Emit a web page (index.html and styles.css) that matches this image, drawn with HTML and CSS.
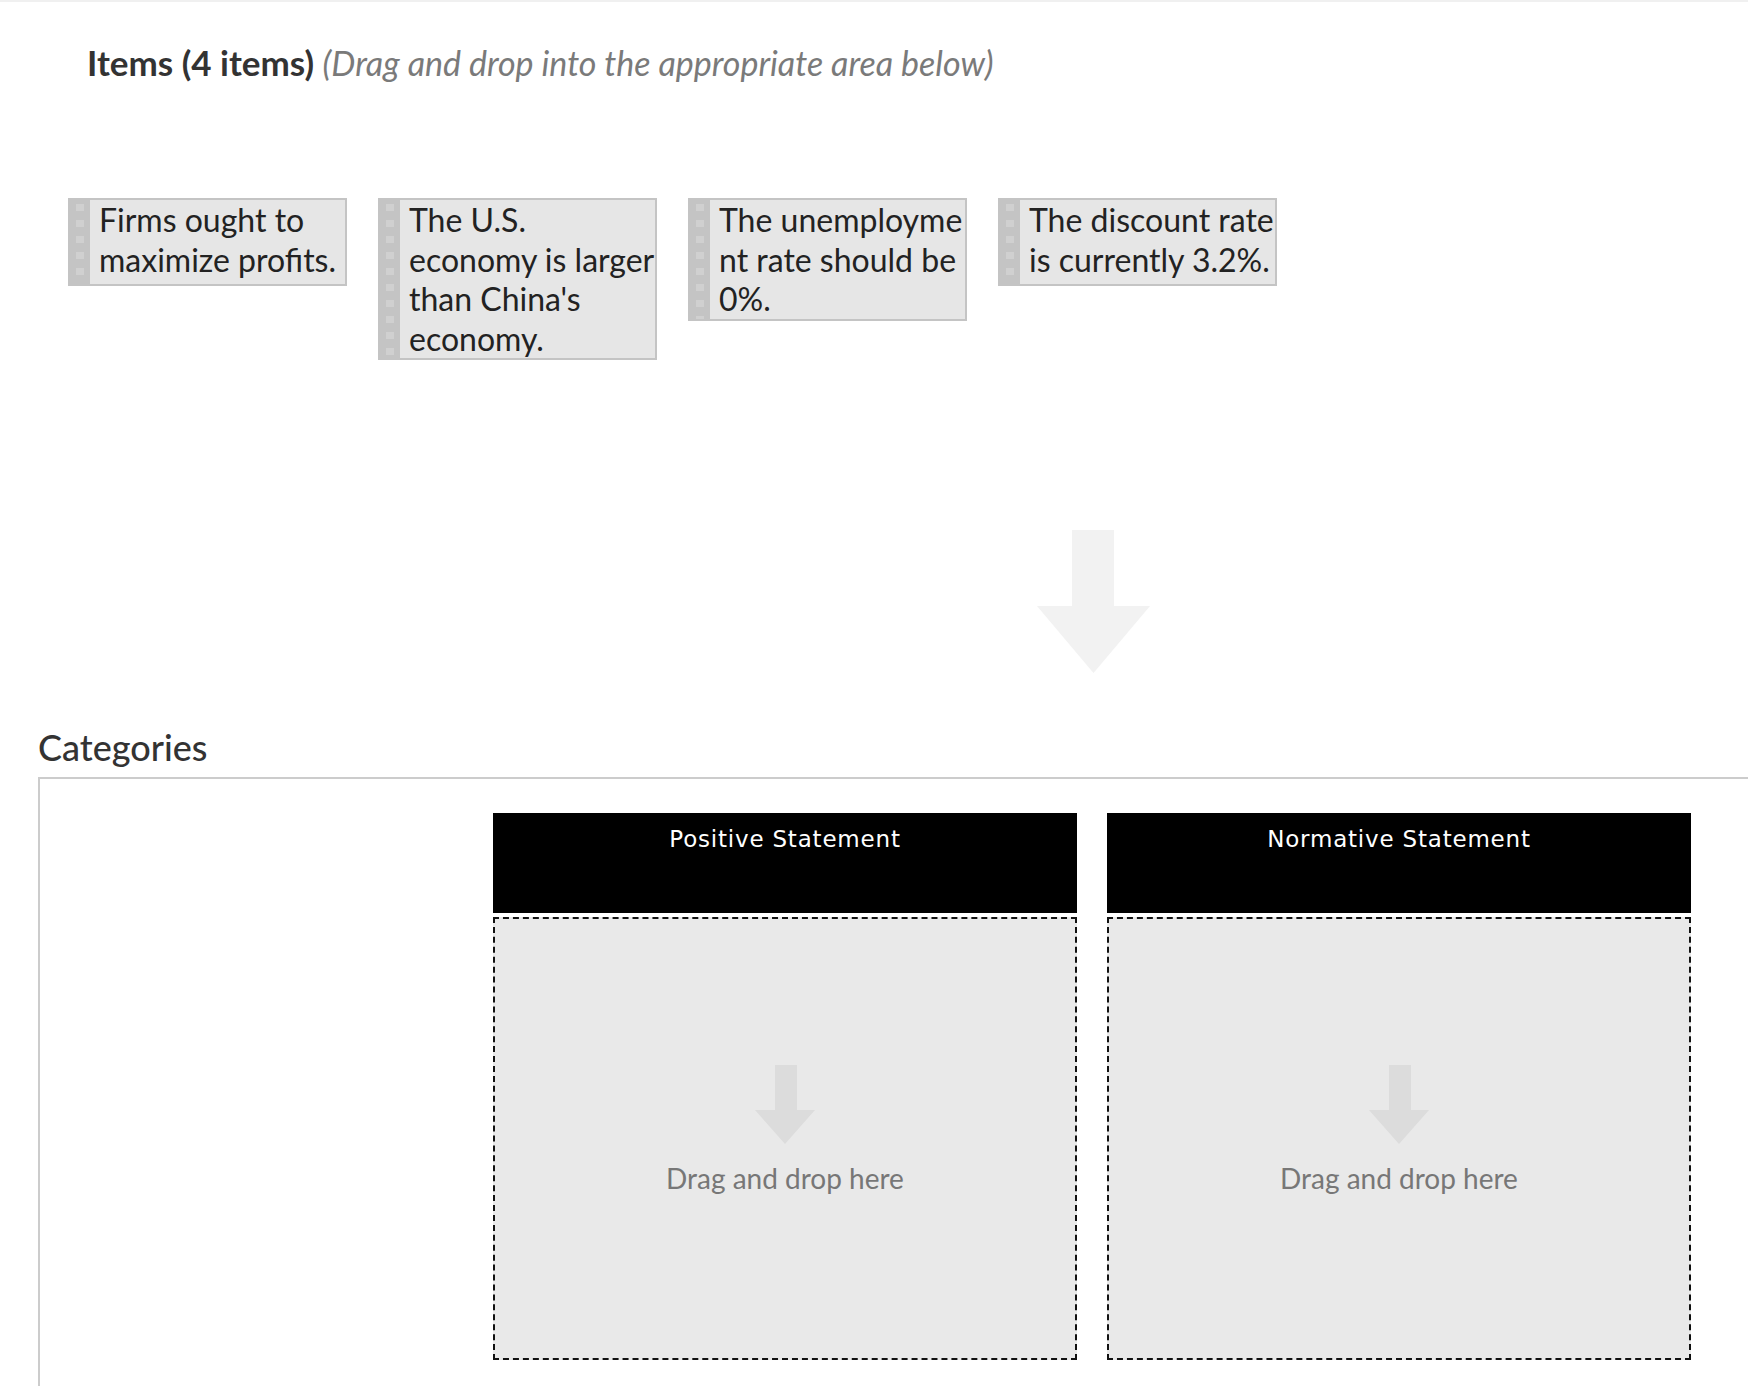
FILE: index.html
```html
<!DOCTYPE html>
<html lang="en">
<head>
<meta charset="utf-8">
<title>Items</title>
<link rel="stylesheet" href="styles.css">
</head>
<body>
<div class="page">
  <h2 class="items-title">Items (4 items) <span class="hint">(Drag and drop into the appropriate area below)</span></h2>

  <div class="items">
    <div class="item"><div class="handle"></div><div class="item-text">Firms ought to maximize profits.</div></div>
    <div class="item"><div class="handle"></div><div class="item-text">The U.S. economy is larger than China's economy.</div></div>
    <div class="item"><div class="handle"></div><div class="item-text">The&nbsp;unemployment rate should be 0%.</div></div>
    <div class="item"><div class="handle"></div><div class="item-text">The discount rate is currently 3.2%.</div></div>
  </div>

  <div class="big-arrow-row">
    <svg class="big-arrow" width="113" height="143" viewBox="0 0 113 143"><polygon points="35,0 77,0 77,76 113,76 56.5,143 0,76 35,76" fill="#f2f2f2"/></svg>
  </div>

  <h2 class="cat-title">Categories</h2>
  <div class="categories">
    <div class="column">
      <div class="col-head">Positive Statement</div>
      <div class="drop">
        <svg class="small-arrow" width="60" height="79" viewBox="0 0 60 79"><polygon points="20,0 42,0 42,45 60,45 30,79 0,45 20,45" fill="#dcdcdc"/></svg>
        <div class="drop-text">Drag and drop here</div>
      </div>
    </div>
    <div class="column">
      <div class="col-head">Normative Statement</div>
      <div class="drop">
        <svg class="small-arrow" width="60" height="79" viewBox="0 0 60 79"><polygon points="20,0 42,0 42,45 60,45 30,79 0,45 20,45" fill="#dcdcdc"/></svg>
        <div class="drop-text">Drag and drop here</div>
      </div>
    </div>
  </div>
</div>
</body>
</html>
```

FILE: styles.css
```css
html, body {
  margin: 0;
  padding: 0;
  background: #fff;
  overflow: hidden;
}
body {
  font-family: Lato, "Noto Sans", sans-serif;
  color: #222;
  border-top: 2px solid #f0f0f0;
}
.page {
  padding-left: 38px;
}
.items-title {
  margin: 40px 0 0 49px;
  font-size: 35px;
  line-height: 40px;
  font-weight: 700;
  color: #333;
  white-space: nowrap;
}
.hint {
  font-weight: 400;
  font-style: italic;
  font-size: 34px;
  color: #7a7a7a;
}
.items {
  display: flex;
  align-items: flex-start;
  gap: 31px;
  margin: 115px 0 0 30px;
}
.item {
  width: 279px;
  min-height: 88px;
  box-sizing: border-box;
  display: flex;
  background: #e6e6e6;
  border: 2px solid #c4c4c4;
}
.handle {
  width: 20px;
  flex: none;
  background-color: #c4c4c4;
  background-image: linear-gradient(to bottom, #d0d0d0 0 7px, transparent 7px 16px);
  background-size: 8px 16px;
  background-repeat: repeat-y;
  background-position: center 4px;
}
.item-text {
  flex: 1;
  padding: 0 0 0 9px;
  font-size: 32px;
  line-height: 39.5px;
  color: #222;
  overflow-wrap: anywhere;
}
.big-arrow-row {
  display: flex;
  margin-top: 170px;
  padding-left: 999px;
}
.big-arrow {
  display: block;
}
.cat-title {
  margin: 52px 0 8px 0;
  font-size: 36px;
  line-height: 44px;
  font-weight: 500;
  color: #333;
}
.categories {
  display: flex;
  gap: 30px;
  border-top: 2px solid #cccccc;
  border-left: 2px solid #cccccc;
  padding: 34px 0 200px 453px;
}
.column {
  width: 584px;
  display: flex;
  flex-direction: column;
  gap: 4px;
}
.col-head {
  height: 100px;
  box-sizing: border-box;
  background: #000;
  color: #fff;
  text-align: center;
  font-family: "DejaVu Sans", sans-serif;
  font-size: 23px;
  line-height: 28px;
  letter-spacing: 0.8px;
  padding-top: 12px;
}
.drop {
  height: 443px;
  box-sizing: border-box;
  background: #e9e9e9;
  border: 2px dashed #111;
  display: flex;
  flex-direction: column;
  align-items: center;
  justify-content: center;
  gap: 17px;
  padding-bottom: 18px;
}
.small-arrow {
  display: block;
}
.drop-text {
  font-size: 28px;
  line-height: 34px;
  color: #777;
}
```
